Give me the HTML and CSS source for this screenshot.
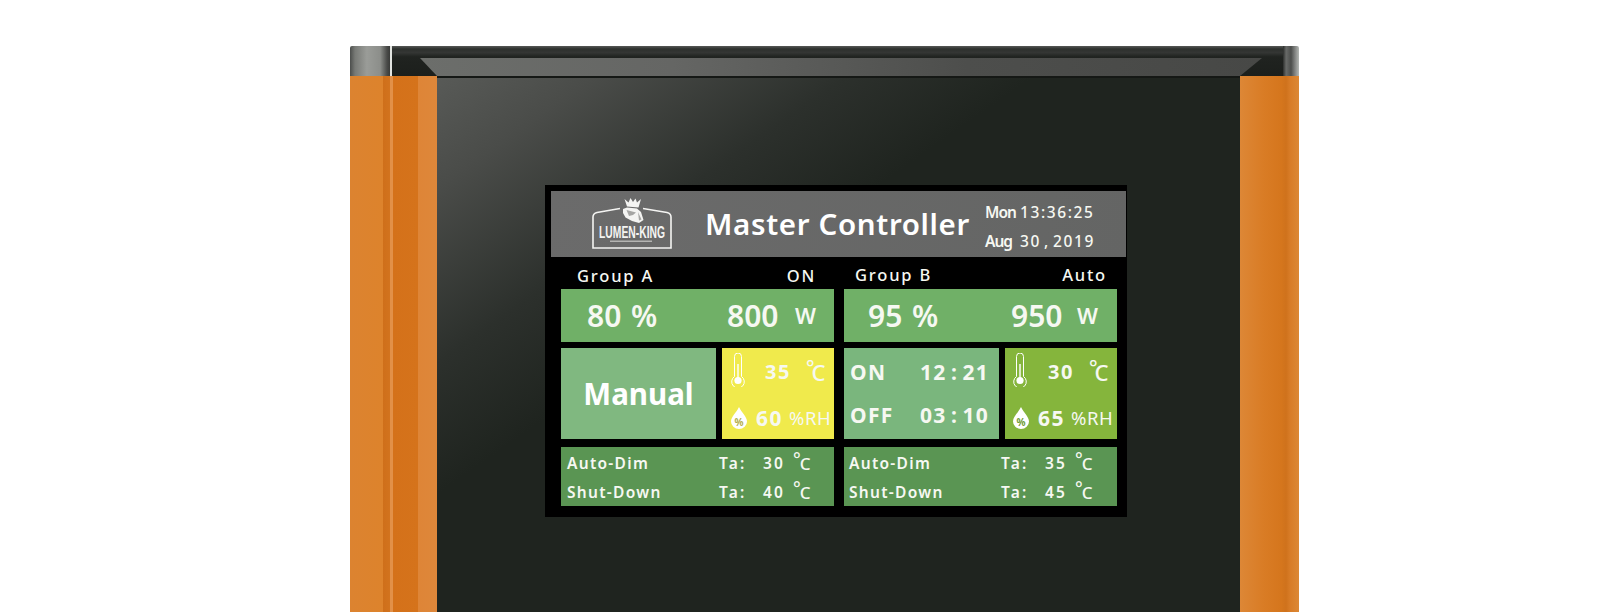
FILE: index.html
```html
<!DOCTYPE html>
<html lang="en">
<head>
<meta charset="utf-8">
<title>Master Controller</title>
<link rel="stylesheet" href="styles.css">
</head>
<body>
<div class="device">
  <div class="top">
    <div class="metal-l"></div>
    <div class="frame"><div class="bevel"></div></div>
    <div class="metal-r"></div>
  </div>
  <div class="body">
    <div class="rail-l"></div>
    <div class="panel">
      <div class="screen">
        <header class="head">
          <svg class="logo" viewBox="0 0 80 52" width="80" height="52">
            <path class="ln" d="M28 10.500L5 14.500Q1 15.500 1 19V50H79V19Q79 15.500 75 14.500L51 10.500"/>
            <path class="fl" d="M32.500 1L36.500 4.500L38.500 0L41 4L43.500 0.500L45 4.500L49 1L46.500 9.500L35 8.500Z"/>
            <path class="fl" d="M31 11L35 9.500L45 10.500L49 14L51.500 22L47 25L40 23L33.500 19.500L31 15Z"/>
            <path class="cut" d="M34.500 12L44 14.500L41 17L37 18Z"/>
            <path class="cut" d="M46 14L49.500 21.500L47 22.500Z"/>
            <text class="logo-t" x="40" y="39.500" text-anchor="middle" textLength="66" lengthAdjust="spacingAndGlyphs">LUMEN-KING</text>
            <rect class="logo-u" x="18" y="42.500" width="42" height="1.500"/>
          </svg>
          <h1 class="title">Master Controller</h1>
          <div class="clock">
            <div class="clock-r"><span class="day">Mon</span><span>13:36:25</span></div>
            <div class="clock-r"><span class="day">Aug</span><span class="date">30 , 2019</span></div>
          </div>
        </header>
        <div class="cols">
          <section class="grp">
            <div class="lab lab-a"><span>Group A</span><span>ON</span></div>
            <div class="bar"><span class="pct">80 %</span><span class="watt">800</span><span class="w">W</span></div>
            <div class="mid">
              <div class="mode">Manual</div>
              <div class="env yellow">
                <div class="env-t">
                  <svg class="thermo" viewBox="0 0 14 34" width="14" height="34"><path d="M3.500 23.500V3.500a3.500 3.500 0 0 1 7 0V23.500a6.300 6.300 0 1 1-7 0Z"/><circle cx="7" cy="27.500" r="3.600"/><rect x="6.300" y="11" width="1.400" height="14"/></svg>
                  <span class="env-n t1">35</span><span class="deg"><i>°</i>C</span>
                </div>
                <div class="env-h">
                  <svg class="drop" viewBox="0 0 16 22" width="16" height="22"><path d="M8 0C11 6 16 10 16 14.500A8 7.500 0 0 1 0 14.500C0 10 5 6 8 0Z"/><text x="8" y="18.500" text-anchor="middle">%</text></svg>
                  <span class="env-n h1">60</span><span class="rh">%RH</span>
                </div>
              </div>
            </div>
            <div class="foot">
              <div class="foot-r"><span class="f-n">Auto-Dim</span><span class="f-t">Ta:</span><span class="f-v">30</span><span class="f-d"><i>°</i>C</span></div>
              <div class="foot-r"><span class="f-n">Shut-Down</span><span class="f-t">Ta:</span><span class="f-v">40</span><span class="f-d"><i>°</i>C</span></div>
            </div>
          </section>
          <section class="grp">
            <div class="lab lab-b"><span>Group B</span><span>Auto</span></div>
            <div class="bar bar-b"><span class="pct">95 %</span><span class="watt">950</span><span class="w">W</span></div>
            <div class="mid">
              <div class="sched">
                <div class="sched-r"><span>ON</span><span>12 : 21</span></div>
                <div class="sched-r"><span>OFF</span><span>03 : 10</span></div>
              </div>
              <div class="env lime">
                <div class="env-t">
                  <svg class="thermo" viewBox="0 0 14 34" width="14" height="34"><path d="M3.500 23.500V3.500a3.500 3.500 0 0 1 7 0V23.500a6.300 6.300 0 1 1-7 0Z"/><circle cx="7" cy="27.500" r="3.600"/><rect x="6.300" y="11" width="1.400" height="14"/></svg>
                  <span class="env-n t2">30</span><span class="deg"><i>°</i>C</span>
                </div>
                <div class="env-h">
                  <svg class="drop" viewBox="0 0 16 22" width="16" height="22"><path d="M8 0C11 6 16 10 16 14.500A8 7.500 0 0 1 0 14.500C0 10 5 6 8 0Z"/><text x="8" y="18.500" text-anchor="middle">%</text></svg>
                  <span class="env-n h1">65</span><span class="rh">%RH</span>
                </div>
              </div>
            </div>
            <div class="foot foot-b">
              <div class="foot-r"><span class="f-n">Auto-Dim</span><span class="f-t">Ta:</span><span class="f-v">35</span><span class="f-d"><i>°</i>C</span></div>
              <div class="foot-r"><span class="f-n">Shut-Down</span><span class="f-t">Ta:</span><span class="f-v">45</span><span class="f-d"><i>°</i>C</span></div>
            </div>
          </section>
        </div>
      </div>
    </div>
    <div class="rail-r"></div>
  </div>
</div>
</body>
</html>
```
FILE: styles.css
```css
* { box-sizing: border-box; }
html, body { margin: 0; height: 612px; overflow: hidden; background: #fff; }
body { font-family: "Noto Sans", "Open Sans", sans-serif; color: #f6f8f2; }
.device { width: 949px; height: 566px; margin: 46px 0 0 350px; display: flex; flex-direction: column; }
.top { height: 30px; display: flex; }
.metal-l { width: 42px; border-top-left-radius: 2px; background: linear-gradient(90deg, #4c4e4c 0, #787a76 12%, #9a9c98 40%, #8c8e8a 72%, #4a4b49 88%, #3a3b39 95%, #e2e4e0 95.500%); }
.metal-r { width: 16px; border-top-right-radius: 2px; background: linear-gradient(90deg, #2c2e2c 0, #686a68 20%, #4c4e4c 50%, #8c8e8c 80%, #b4b8b4 100%); }
.frame { flex: 1; padding: 12px 21px 0 28px; display: flex; flex-direction: column; background: linear-gradient(180deg, #565856 0, #2d302d 10%, #343634 22%, #202320 36%, #1c1f1c 100%); }
.bevel { flex: 1; background: linear-gradient(90deg, #6c6e6b 0, #656664 30%, #4d4e4c 65%, #474846 100%); clip-path: polygon(0 0, 100% 0, calc(100% - 22px) 100%, 17px 100%); }
.body { flex: 1; display: flex; min-height: 0; }
.rail-l { width: 87px; background: linear-gradient(90deg, #dc8330 0, #dd832c 37.500%, #cf6f1a 38%, #d2731e 46%, #e29048 46.500%, #e29048 49%, #d4711a 49.500%, #d5731b 78%, #de8537 78.500%, #de873a 100%); }
.rail-r { width: 59px; background: linear-gradient(90deg, #dd8736 0, #d97c25 40%, #d5761d 70%, #cf721c 78%, #d87c27 85%, #dc8835 100%); }
.panel { flex: 1; padding: 109px 0 0 108px; border-top: 2px solid #151815; background: linear-gradient(145deg, #585a57 0, #4a4c49 10%, #2c302c 26%, #1f241f 38%, #1f241f 100%); }
.screen { width: 582px; height: 332px; padding: 6px 1px 11px 6px; background: #000; display: flex; flex-direction: column; margin-top: -2px; }
.head { height: 66px; flex: none; display: flex; align-items: center; background: linear-gradient(100deg, #6b6b6b 0, #646564 100%); padding-left: 41px; }
.logo { flex: none; overflow: visible; }
.ln { fill: none; stroke: #f4f4f2; stroke-width: 1.600; }
.fl { fill: #f4f4f2; }
.cut { fill: #a5a5a3; }
.logo-t { font-family: "Liberation Sans", sans-serif; font-size: 16.500px; font-weight: 700; fill: #f4f4f2; }
.logo-u { fill: #b4b4b2; }
.title { margin: 0 0 0 33px; width: 280px; flex: none; font-size: 29.500px; line-height: 40px; font-weight: 600; letter-spacing: .65px; color: #fff; white-space: nowrap; }
.clock { display: flex; flex-direction: column; gap: 10px; margin-top: 5px; font-size: 15.500px; line-height: 19px; font-weight: 500; letter-spacing: 1.600px; }
.clock-r { display: flex; gap: 5px; white-space: nowrap; }
.day { width: 30px; flex: none; font-size: 15.500px; font-weight: 600; letter-spacing: -1px; }
.date { word-spacing: -2.500px; }
.cols { display: flex; gap: 10px; margin-left: 10px; width: 556px; }
.grp { width: 273px; flex: none; display: flex; flex-direction: column; }
.lab { height: 32px; display: flex; justify-content: space-between; padding: 8px 18px 0 16px; font-size: 16.500px; line-height: 22px; font-weight: 500; letter-spacing: 1.800px; white-space: nowrap; }
.lab-b { padding: 7px 10px 0 11px; }
.bar { height: 53px; display: flex; align-items: center; background: #70b067; padding-left: 26px; }
.bar-b { padding-left: 24px; }
.pct { width: 140px; flex: none; font-size: 30px; line-height: 36px; font-weight: 600; word-spacing: 2px; }
.bar-b .pct { width: 143px; }
.watt { width: 68px; flex: none; font-size: 30px; line-height: 36px; font-weight: 600; }
.bar-b .watt { width: 66px; }
.w { font-size: 22px; line-height: 30px; font-weight: 600; margin-top: -2px; }
.mid { display: flex; gap: 6px; margin-top: 6px; height: 91px; }
.mode { width: 155px; flex: none; display: flex; align-items: center; justify-content: center; background: #80b880; font-size: 29.500px; font-weight: 700; color: #fff; }
.sched { width: 155px; flex: none; padding: 9px 10px 0 6px; display: flex; flex-direction: column; gap: 13px; background: #7ab67d; font-size: 21px; line-height: 30px; font-weight: 700; letter-spacing: 1.300px; word-spacing: -2.500px; }
.sched-r { display: flex; justify-content: space-between; white-space: pre; }
.env { flex: 1; display: flex; flex-direction: column; padding: 5px 0 0 8px; white-space: nowrap; }
.yellow { background: #f0ea4c; padding-left: 9px; }
.lime { background: #85b53c; }
.env-t { display: flex; align-items: center; height: 34px; }
.env-h { display: flex; align-items: center; height: 22px; margin-top: 20px; }
.thermo { flex: none; }
.thermo path { fill: none; stroke: #fff; stroke-width: 1; }
.thermo circle, .thermo rect { fill: #fff; }
.drop { flex: none; }
.drop path { fill: #fff; }
.drop text { font-size: 10px; font-weight: 700; }
.yellow .drop text { fill: #b4ae4a; }
.lime .drop text { fill: #6f9a34; }
.env-n { font-size: 20px; line-height: 28px; font-weight: 700; letter-spacing: 1.500px; }
.env-t .env-n { margin-top: 3px; }
.env-h .env-n { font-size: 21px; }
.t1 { margin-left: 20px; }
.t2 { margin-left: 21px; }
.h1 { margin-left: 9px; }
.deg { margin: 3px 0 0 15px; font-size: 22px; line-height: 28px; font-weight: 500; }
.deg i { font-style: normal; font-size: 20px; line-height: 0; vertical-align: 7px; margin-right: -3px; }
.rh { margin-left: 6px; font-size: 18.500px; line-height: 28px; letter-spacing: .5px; }
.foot { margin-top: 8px; height: 59px; padding: 2px 0 0 6px; background: #5a9553; font-size: 15.500px; line-height: 29px; font-weight: 600; letter-spacing: 1.300px; white-space: nowrap; }
.foot-b { padding-left: 5px; }
.foot-r { display: flex; height: 29px; }
.f-n { width: 152px; flex: none; }
.f-t { width: 44px; flex: none; letter-spacing: 2.200px; }
.f-v { width: 30px; flex: none; letter-spacing: 2.200px; }
.f-d { font-size: 17px; font-weight: 500; letter-spacing: 0; }
.f-d i { font-style: normal; font-size: 18px; line-height: 0; vertical-align: 4px; margin-right: -1px; }
```
